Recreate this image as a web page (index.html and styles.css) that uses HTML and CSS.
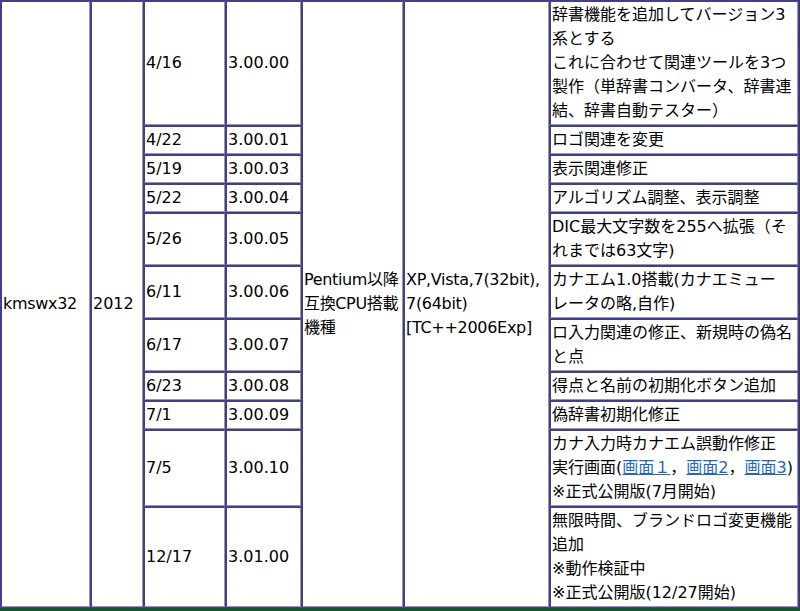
FILE: index.html
```html
<!DOCTYPE html>
<html lang="ja">
<head>
<meta charset="utf-8">
<title>kmswx32 更新履歴</title>
<link rel="stylesheet" href="styles.css">
</head>
<body>
<table class="history">
  <tr>
    <td class="cell c-name" rowspan="11">kmswx32</td>
    <td class="cell c-year" rowspan="11">2012</td>
    <td class="cell c-date">4/16</td>
    <td class="cell c-ver">3.00.00</td>
    <td class="cell c-cpu" rowspan="11">Pentium以降<br>互換CPU搭載<br>機種</td>
    <td class="cell c-os" rowspan="11">XP,Vista,7(32bit),<br>7(64bit)<br>[TC++2006Exp]</td>
    <td class="cell c-note">辞書機能を追加してバージョン3<br>系とする<br>これに合わせて関連ツールを3つ<br>製作（単辞書コンバータ、辞書連<br>結、辞書自動テスター）</td>
  </tr>
  <tr>
    <td class="cell">4/22</td>
    <td class="cell">3.00.01</td>
    <td class="cell">ロゴ関連を変更</td>
  </tr>
  <tr>
    <td class="cell">5/19</td>
    <td class="cell">3.00.03</td>
    <td class="cell">表示関連修正</td>
  </tr>
  <tr>
    <td class="cell">5/22</td>
    <td class="cell">3.00.04</td>
    <td class="cell">アルゴリズム調整、表示調整</td>
  </tr>
  <tr>
    <td class="cell">5/26</td>
    <td class="cell">3.00.05</td>
    <td class="cell">DIC最大文字数を255へ拡張（そ<br>れまでは63文字)</td>
  </tr>
  <tr>
    <td class="cell">6/11</td>
    <td class="cell">3.00.06</td>
    <td class="cell">カナエム1.0搭載(カナエミュー<br>レータの略,自作)</td>
  </tr>
  <tr>
    <td class="cell">6/17</td>
    <td class="cell">3.00.07</td>
    <td class="cell">ロ入力関連の修正、新規時の偽名<br>と点</td>
  </tr>
  <tr>
    <td class="cell">6/23</td>
    <td class="cell">3.00.08</td>
    <td class="cell">得点と名前の初期化ボタン追加</td>
  </tr>
  <tr>
    <td class="cell">7/1</td>
    <td class="cell">3.00.09</td>
    <td class="cell">偽辞書初期化修正</td>
  </tr>
  <tr>
    <td class="cell">7/5</td>
    <td class="cell">3.00.10</td>
    <td class="cell">カナ入力時カナエム誤動作修正<br>実行画面(<a class="shot" href="#">画面１</a>，<a class="shot" href="#">画面2</a>，<a class="shot" href="#">画面3</a>)<br>※正式公開版(7月開始)</td>
  </tr>
  <tr>
    <td class="cell">12/17</td>
    <td class="cell">3.01.00</td>
    <td class="cell">無限時間、ブランドロゴ変更機能<br>追加<br>※動作検証中<br>※正式公開版(12/27開始)</td>
  </tr>
</table>
<div class="footer-bar"></div>
</body>
</html>
```

FILE: styles.css
```css
html, body {
  margin: 0;
  padding: 0;
  background: #ffffff;
}

body {
  font-family: "DejaVu Sans", "Noto Sans CJK JP", sans-serif;
  font-size: 16px;
  line-height: 24px;
  color: #000000;
  overflow: hidden;
}

.history {
  table-layout: fixed;
  width: 800px;
  border-collapse: separate;
  border-spacing: 1px;
  background: #3f3f8c;
  border-style: solid;
  border-width: 0 1px 1px 0;
  border-color: #35357a;
}

.cell {
  background: #ffffff;
  padding: 1px;
  border: 1px solid;
  border-color: #3f3f8c #9a9a9a #9a9a9a #3f3f8c;
  vertical-align: middle;
  text-align: left;
  white-space: nowrap;
  overflow: visible;
}

.c-name { width: 85px; letter-spacing: -0.3px; }
.c-year { width: 48px; }
.c-date { width: 77px; }
.c-ver  { width: 71px; }
.c-cpu  { width: 97px; letter-spacing: -0.35px; }
.c-os   { width: 141px; letter-spacing: -0.3px; }
.c-note { width: 244px; }

.shot {
  color: #1f66c4;
  text-decoration: underline;
}

.footer-bar {
  height: 2px;
  background: #0d5c12;
}
```
